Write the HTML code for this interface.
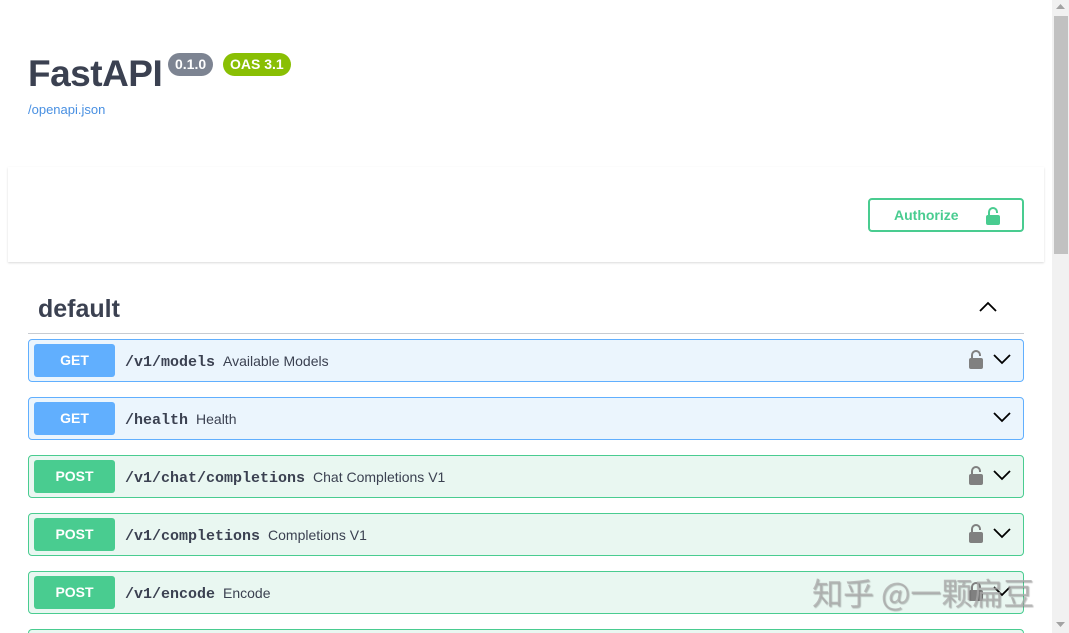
<!DOCTYPE html>
<html><head><meta charset="utf-8"><style>
*{margin:0;padding:0;box-sizing:border-box}
html,body{width:1069px;height:633px;overflow:hidden}
body{background:#fff;font-family:"Liberation Sans","Noto Sans CJK SC",sans-serif;position:relative;color:#3b4151}
.abs{position:absolute}
.title{left:28px;top:53px;font-size:37px;font-weight:bold;color:#3b4151;letter-spacing:-0.5px}
.badge{top:53px;height:23px;border-radius:12px;color:#fff;font-weight:bold;font-size:14px;line-height:23px;padding:0 7px}
.link{left:28px;top:102px;font-size:13px;color:#4990e2}
.card{left:8px;top:167px;width:1036px;height:95px;background:#fff;box-shadow:0 1px 2px 0 rgba(0,0,0,.15)}
.auth{left:868px;top:198px;width:156px;height:34px;border:2px solid #49cc90;border-radius:4px;color:#49cc90;font-weight:bold;font-size:14px;line-height:30px;padding-left:24px}
.def{left:38px;top:295px;font-size:25px;font-weight:bold;color:#3b4151}
.hr{left:28px;top:333px;width:996px;height:1px;background:#c8ccd2}
.row{left:28px;width:996px;height:43px;border:1px solid;border-radius:4px}
.get{background:#ebf5fd;border-color:#61affe}
.post{background:#e9f7f1;border-color:#49cc90}
.m{position:absolute;left:5px;top:4px;width:81px;height:33px;border-radius:3px;color:#fff;font-weight:bold;font-size:14px;line-height:33px;text-align:center}
.get .m{background:#61affe}.post .m{background:#49cc90}
.p{position:absolute;left:96px;top:13px;font-family:"Liberation Mono",monospace;font-weight:bold;font-size:15px;color:#3b4151;white-space:nowrap}
.p span{font-family:"Liberation Sans",sans-serif;font-weight:normal;font-size:14px;margin-left:8px}
.lock{position:absolute;left:939px;top:9px}
.chev{position:absolute;left:963px;top:12px}
.sb{left:1052px;top:0;width:17px;height:633px;background:#f1f1f1}
.thumb{left:1054px;top:16px;width:14px;height:238px;background:#c1c1c1}
.wm{left:812px;top:569px;font-size:31px;color:rgba(170,170,170,.75);text-shadow:1px 1px 1px rgba(80,80,80,.35);font-family:"Noto Sans CJK SC",sans-serif;letter-spacing:0}
</style></head><body>
<div class="abs title">FastAPI</div>
<div class="abs badge" style="left:168px;background:#7d8492">0.1.0</div>
<div class="abs badge" style="left:223px;background:#89bf04">OAS 3.1</div>
<div class="abs link">/openapi.json</div>
<div class="abs card"></div>
<div class="abs auth">Authorize
<svg class="abs" style="left:115px;top:7px" width="16" height="18" viewBox="0 0 16 18"><path d="M4 8V5a4 4 0 0 1 8 0v1" fill="none" stroke="#49cc90" stroke-width="2"/><rect x="1" y="8" width="14" height="10" rx="2" fill="#49cc90"/></svg></div>
<div class="abs def">default</div>
<svg class="abs" style="left:978px;top:301px" width="20" height="12" viewBox="0 0 20 12"><path d="M2 10L10 2L18 10" fill="none" stroke="#000" stroke-width="1.8"/></svg>
<div class="abs hr"></div>

<div class="abs row get" style="top:339px"><div class="m">GET</div><div class="p">/v1/models<span>Available Models</span></div>
<svg class="lock" width="16" height="20" viewBox="0 0 16 20"><path d="M4 9V6a4 4 0 0 1 8 0v1" fill="none" stroke="#808080" stroke-width="2"/><rect x="1" y="9" width="14" height="11" rx="2" fill="#808080"/></svg>
<svg class="chev" width="20" height="14" viewBox="0 0 20 14"><path d="M2 3L10 11L18 3" fill="none" stroke="#000" stroke-width="1.8"/></svg></div>

<div class="abs row get" style="top:397px"><div class="m">GET</div><div class="p">/health<span>Health</span></div>
<svg class="chev" width="20" height="14" viewBox="0 0 20 14"><path d="M2 3L10 11L18 3" fill="none" stroke="#000" stroke-width="1.8"/></svg></div>

<div class="abs row post" style="top:455px"><div class="m">POST</div><div class="p">/v1/chat/completions<span>Chat Completions V1</span></div>
<svg class="lock" width="16" height="20" viewBox="0 0 16 20"><path d="M4 9V6a4 4 0 0 1 8 0v1" fill="none" stroke="#808080" stroke-width="2"/><rect x="1" y="9" width="14" height="11" rx="2" fill="#808080"/></svg>
<svg class="chev" width="20" height="14" viewBox="0 0 20 14"><path d="M2 3L10 11L18 3" fill="none" stroke="#000" stroke-width="1.8"/></svg></div>

<div class="abs row post" style="top:513px"><div class="m">POST</div><div class="p">/v1/completions<span>Completions V1</span></div>
<svg class="lock" width="16" height="20" viewBox="0 0 16 20"><path d="M4 9V6a4 4 0 0 1 8 0v1" fill="none" stroke="#808080" stroke-width="2"/><rect x="1" y="9" width="14" height="11" rx="2" fill="#808080"/></svg>
<svg class="chev" width="20" height="14" viewBox="0 0 20 14"><path d="M2 3L10 11L18 3" fill="none" stroke="#000" stroke-width="1.8"/></svg></div>

<div class="abs row post" style="top:571px"><div class="m">POST</div><div class="p">/v1/encode<span>Encode</span></div>
<svg class="lock" width="16" height="20" viewBox="0 0 16 20"><path d="M4 9V6a4 4 0 0 1 8 0v1" fill="none" stroke="#808080" stroke-width="2"/><rect x="1" y="9" width="14" height="11" rx="2" fill="#808080"/></svg>
<svg class="chev" width="20" height="14" viewBox="0 0 20 14"><path d="M2 3L10 11L18 3" fill="none" stroke="#000" stroke-width="1.8"/></svg></div>

<div class="abs row post" style="top:629px;height:4px;border-bottom:none;border-radius:4px 4px 0 0"></div>
<div class="abs wm">知乎 @一颗扁豆</div>
<div class="abs sb"></div>
<div class="abs thumb"></div>
<svg class="abs" style="left:1056px;top:4px" width="9" height="6"><path d="M0 5L4.5 0L9 5Z" fill="#a3a3a3"/></svg>
<svg class="abs" style="left:1056px;top:622px" width="9" height="6"><path d="M0 0L4.5 5L9 0Z" fill="#a3a3a3"/></svg>
</body></html>
